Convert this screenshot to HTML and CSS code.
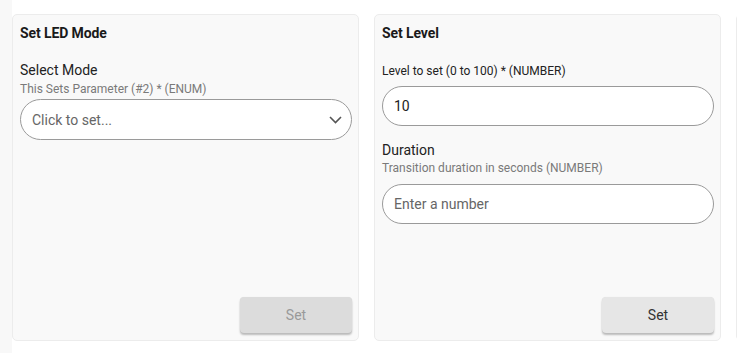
FILE: index.html
```html
<!DOCTYPE html>
<html>
<head>
<meta charset="utf-8">
<link rel="stylesheet" href="styles.css">
</head>
<body>
<div class="strip"></div>
<div class="row">
  <div class="card">
    <div class="title">Set LED Mode</div>
    <div class="fields">
      <div class="label big first">Select Mode</div>
      <div class="desc d1">This Sets Parameter (#2) * (ENUM)</div>
      <div class="select">
        <span class="placeholder">Click to set...</span>
        <svg class="chev" width="13" height="8" viewBox="0 0 13 8"><path d="M1 1 L6.5 6.5 L12 1" fill="none" stroke="#555" stroke-width="1.6"/></svg>
      </div>
    </div>
    <div class="actions"><button class="btn disabled">Set</button></div>
  </div>
  <div class="card">
    <div class="title">Set Level</div>
    <div class="fields">
      <div class="label small first2">Level to set (0 to 100) * (NUMBER)</div>
      <div class="input lvl"><span class="val">10</span></div>
      <div class="label big dur">Duration</div>
      <div class="desc d2">Transition duration in seconds (NUMBER)</div>
      <div class="input dinput"><span class="placeholder">Enter a number</span></div>
    </div>
    <div class="actions"><button class="btn">Set</button></div>
  </div>
  <div class="card"></div>
</div>
</body>
</html>
```
FILE: styles.css
```css
html, body {
  margin: 0;
  padding: 0;
  background: #ffffff;
  font-family: Roboto, "Liberation Sans", sans-serif;
  overflow: hidden;
}
body {
  width: 737px;
  height: 353px;
  position: relative;
}
.strip {
  position: absolute;
  left: 0;
  top: 0;
  width: 12px;
  height: 353px;
  background: #f8f8f8;
}
.row {
  display: flex;
  gap: 15px;
  padding: 14px 0 0 12px;
  position: relative;
}
.card {
  flex: 0 0 347px;
  width: 347px;
  height: 327px;
  box-sizing: border-box;
  background: #f9f9f9;
  border: 1px solid #ececec;
  border-radius: 5px;
  padding: 8px 6px 7px 7px;
  display: flex;
  flex-direction: column;
}
.title {
  font-weight: 700;
  font-size: 14px;
  line-height: 20px;
  color: #1a1a1a;
  letter-spacing: -0.1px;
}
.fields {
  display: flex;
  flex-direction: column;
  flex: 1;
}
.label.big {
  font-size: 14px;
  line-height: 20px;
  color: #222;
}
.label.small {
  font-size: 12px;
  line-height: 16px;
  color: #222;
}
.first { margin-top: 17px; }
.first2 { margin-top: 20px; }
.dur { margin-top: 14px; }
.desc {
  font-size: 12px;
  line-height: 15px;
  color: #7a7a7a;
}
.d1 { margin-top: 2px; }
.d2 { margin-top: 1px; }
.select, .input {
  box-sizing: border-box;
  background: #fff;
  border: 1px solid #9a9a9a;
  border-radius: 21px;
  display: flex;
  align-items: center;
  padding: 0 12px 0 11px;
  font-size: 14px;
}
.select {
  height: 41px;
  margin-top: 2px;
  justify-content: space-between;
  padding-right: 9px;
}
.input { height: 40px; }
.lvl { margin-top: 7px; }
.dinput { margin-top: 8px; }
.placeholder { color: #666; }
.val { color: #222; }
.actions {
  display: flex;
  justify-content: flex-end;
}
.btn {
  width: 112px;
  height: 36px;
  border: none;
  border-radius: 4px;
  background: #e6e6e6;
  color: #333;
  font-family: Roboto, "Liberation Sans", sans-serif;
  font-size: 14px;
  box-shadow: 0 2px 2px rgba(0,0,0,0.25), 0 0 1px rgba(0,0,0,0.1);
}
.btn.disabled {
  background: #dcdcdc;
  color: #999;
}
```
